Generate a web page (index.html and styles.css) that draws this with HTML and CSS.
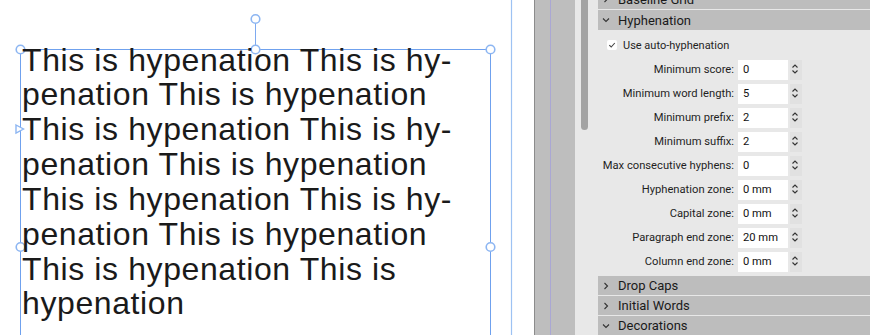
FILE: index.html
```html
<!DOCTYPE html>
<html>
<head>
<meta charset="utf-8">
<link rel="stylesheet" href="styles.css">
</head>
<body>
<div class="app">
  <div class="canvas">
    <svg class="overlay" width="534" height="335" viewBox="0 0 534 335">
      <line x1="511.5" y1="0" x2="511.5" y2="335" stroke="#9dc2f3" stroke-width="1.2"/>
      <rect x="20.5" y="49.5" width="470" height="320" fill="none" stroke="#6fa1ee" stroke-width="1"/>
      <line x1="255.5" y1="19" x2="255.5" y2="49" stroke="#7eaaf0" stroke-width="1"/>
      <g fill="#fff" stroke="#8db6f2" stroke-width="1.6">
        <circle cx="255.5" cy="19" r="4.3"/>
        <circle cx="20.5" cy="49.5" r="4.3"/>
        <circle cx="255.5" cy="49.5" r="4.3"/>
        <circle cx="490.5" cy="49.5" r="4.3"/>
        <circle cx="20.5" cy="247" r="4.3"/>
        <circle cx="490.5" cy="247" r="4.3"/>
        <path d="M16 125 L23.5 129 L16 133 Z" stroke-width="1.4"/>
      </g>
    </svg>
    <div class="story">
      <span class="ln">This is hypenation This is hy-</span>
      <span class="ln">penation This is hypenation</span>
      <span class="ln">This is hypenation This is hy-</span>
      <span class="ln">penation This is hypenation</span>
      <span class="ln">This is hypenation This is hy-</span>
      <span class="ln">penation This is hypenation</span>
      <span class="ln">This is hypenation This is</span>
      <span class="ln">hypenation</span>
    </div>
  </div>
  <div class="divider"></div>
  <div class="strip"></div>
  <div class="panel">
    <div class="gutter"><div class="thumb"></div></div>
    <div class="sections">
      <div class="sec-head first">
        <svg class="chev" width="8" height="8" viewBox="0 0 8 8"><path d="M2.5 1 L5.5 4 L2.5 7" fill="none" stroke="#333" stroke-width="1.1"/></svg>
        <span>Baseline Grid</span>
      </div>
      <div class="sec-head">
        <svg class="chev" width="8" height="8" viewBox="0 0 8 8"><path d="M1 2.5 L4 5.5 L7 2.5" fill="none" stroke="#333" stroke-width="1.1"/></svg>
        <span>Hyphenation</span>
      </div>
      <div class="sec-body">
        <div class="check">
          <span class="box"><svg width="10" height="10" viewBox="0 0 10 10"><path d="M2.3 5.2 L4.2 7 L7.8 3" fill="none" stroke="#444" stroke-width="1.1"/></svg></span>
          <span class="check-label">Use auto-hyphenation</span>
        </div>
        <div class="fields">
          <span class="lbl">Minimum score:</span><span class="val">0</span><span class="spin"><svg width="10" height="20" viewBox="0 0 10 20"><path d="M2.5 7.5 L5 5 L7.5 7.5 M2.5 10.5 L5 13 L7.5 10.5" fill="none" stroke="#333" stroke-width="1.1"/></svg></span>
          <span class="lbl">Minimum word length:</span><span class="val">5</span><span class="spin"><svg width="10" height="20" viewBox="0 0 10 20"><path d="M2.5 7.5 L5 5 L7.5 7.5 M2.5 10.5 L5 13 L7.5 10.5" fill="none" stroke="#333" stroke-width="1.1"/></svg></span>
          <span class="lbl">Minimum prefix:</span><span class="val">2</span><span class="spin"><svg width="10" height="20" viewBox="0 0 10 20"><path d="M2.5 7.5 L5 5 L7.5 7.5 M2.5 10.5 L5 13 L7.5 10.5" fill="none" stroke="#333" stroke-width="1.1"/></svg></span>
          <span class="lbl">Minimum suffix:</span><span class="val">2</span><span class="spin"><svg width="10" height="20" viewBox="0 0 10 20"><path d="M2.5 7.5 L5 5 L7.5 7.5 M2.5 10.5 L5 13 L7.5 10.5" fill="none" stroke="#333" stroke-width="1.1"/></svg></span>
          <span class="lbl">Max consecutive hyphens:</span><span class="val">0</span><span class="spin"><svg width="10" height="20" viewBox="0 0 10 20"><path d="M2.5 7.5 L5 5 L7.5 7.5 M2.5 10.5 L5 13 L7.5 10.5" fill="none" stroke="#333" stroke-width="1.1"/></svg></span>
          <span class="lbl">Hyphenation zone:</span><span class="val">0 mm</span><span class="spin"><svg width="10" height="20" viewBox="0 0 10 20"><path d="M2.5 7.5 L5 5 L7.5 7.5 M2.5 10.5 L5 13 L7.5 10.5" fill="none" stroke="#333" stroke-width="1.1"/></svg></span>
          <span class="lbl">Capital zone:</span><span class="val">0 mm</span><span class="spin"><svg width="10" height="20" viewBox="0 0 10 20"><path d="M2.5 7.5 L5 5 L7.5 7.5 M2.5 10.5 L5 13 L7.5 10.5" fill="none" stroke="#333" stroke-width="1.1"/></svg></span>
          <span class="lbl">Paragraph end zone:</span><span class="val">20 mm</span><span class="spin"><svg width="10" height="20" viewBox="0 0 10 20"><path d="M2.5 7.5 L5 5 L7.5 7.5 M2.5 10.5 L5 13 L7.5 10.5" fill="none" stroke="#333" stroke-width="1.1"/></svg></span>
          <span class="lbl">Column end zone:</span><span class="val">0 mm</span><span class="spin"><svg width="10" height="20" viewBox="0 0 10 20"><path d="M2.5 7.5 L5 5 L7.5 7.5 M2.5 10.5 L5 13 L7.5 10.5" fill="none" stroke="#333" stroke-width="1.1"/></svg></span>
        </div>
      </div>
      <div class="sec-head">
        <svg class="chev" width="8" height="8" viewBox="0 0 8 8"><path d="M2.5 1 L5.5 4 L2.5 7" fill="none" stroke="#333" stroke-width="1.1"/></svg>
        <span>Drop Caps</span>
      </div>
      <div class="sec-head">
        <svg class="chev" width="8" height="8" viewBox="0 0 8 8"><path d="M2.5 1 L5.5 4 L2.5 7" fill="none" stroke="#333" stroke-width="1.1"/></svg>
        <span>Initial Words</span>
      </div>
      <div class="sec-head">
        <svg class="chev" width="8" height="8" viewBox="0 0 8 8"><path d="M1 2.5 L4 5.5 L7 2.5" fill="none" stroke="#333" stroke-width="1.1"/></svg>
        <span>Decorations</span>
      </div>
    </div>
  </div>
</div>
</body>
</html>
```
FILE: styles.css
```css
* { box-sizing: border-box; }
html, body { margin: 0; padding: 0; }
body { width: 870px; height: 335px; overflow: hidden; background: #e8e8e8; }

.app { display: flex; width: 870px; height: 335px; overflow: hidden; }

.canvas { position: relative; width: 534px; height: 335px; background: #fff; flex: none; overflow: hidden; }
.overlay { position: absolute; left: 0; top: 0; }
.story {
  position: absolute; left: 22px; top: 42.5px;
  font-family: "Liberation Sans", Arial, sans-serif;
  font-size: 32px; line-height: 34.85px; letter-spacing: 0.6px;
  color: #1a1a1a; white-space: nowrap;
}
.ln { display: block; }

.divider { width: 1px; flex: none; background: #8c8c8c; }
.strip {
  width: 40px; flex: none;
  background: linear-gradient(to right, #bebebe 0, #bebebe 15px, #aaa7d4 15px, #aaa7d4 16px, #bebebe 16px);
}

.panel { flex: 1; display: flex; background: #e8e8e8; font-family: Roboto, "Noto Sans", sans-serif; }
.gutter { width: 23px; flex: none; padding-left: 6px; }
.thumb { width: 7px; height: 130px; background: #a3a3a3; border-radius: 0 0 4px 4px; }

.sections { flex: 1; display: flex; flex-direction: column; }
.sec-head {
  height: 19px; margin-bottom: 1px; background: #bdbdbd;
  display: flex; align-items: center; padding-left: 4px;
  font-size: 13px; color: #1a1a1a; flex: none;
}
.sec-head.first { height: 20px; margin-top: -11px; }
.sections > .sec-head:nth-child(2) { height: 20px; margin-bottom: 0; }
.chev { margin-right: 8px; flex: none; }

.sec-body { padding: 10px 0 4px 0; }
.check { display: flex; align-items: center; height: 10px; padding-left: 9px; }
.box { width: 10px; height: 10px; background: #fff; border-radius: 2px; display: block; }
.box svg { display: block; }
.check-label { margin-left: 6px; font-size: 11px; color: #1f1f1f; line-height: 10px; padding-top: 1px; }

.fields {
  margin-top: 10px;
  display: grid; grid-template-columns: 136px 50px 10px;
  column-gap: 4px; row-gap: 4px; grid-auto-rows: 20px;
}
.lbl { text-align: right; font-size: 11.2px; line-height: 20px; color: #1f1f1f; white-space: nowrap; }
.val { background: #fff; font-size: 11.2px; line-height: 20px; padding-left: 5px; color: #111; }
.spin { background: #e1e1e1; margin-left: -2px; }
.spin svg { display: block; }
```
